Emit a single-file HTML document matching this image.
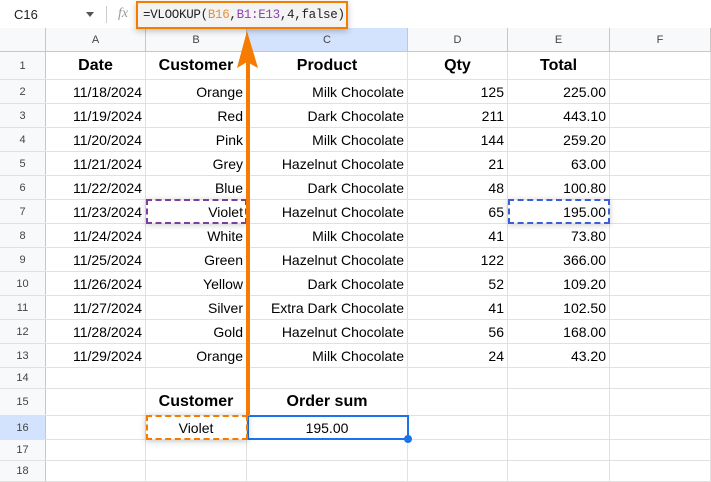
<!DOCTYPE html>
<html><head><meta charset="utf-8"><style>
*{margin:0;padding:0;box-sizing:border-box}
body{width:711px;height:482px;overflow:hidden;background:#fff;font-family:"Liberation Sans",Arial,sans-serif;position:relative}
.fb{position:absolute;left:0;top:0;width:711px;height:29px;background:#fff;border-bottom:1px solid #c7c7c7}
.nm{position:absolute;left:14px;top:7px;font-size:13px;color:#222}
.dd{position:absolute;left:86px;top:12px;width:0;height:0;border-left:4px solid transparent;border-right:4px solid transparent;border-top:5px solid #555}
.sep{position:absolute;left:106px;top:6px;width:1px;height:17px;background:#ccc}
.fx{position:absolute;left:118px;top:6px;font-family:"Liberation Serif",serif;font-style:italic;font-size:14px;color:#999}
.fbox{position:absolute;left:136px;top:1px;width:212px;height:28px;border:2px solid #f57c00;background:#f3f3f3;box-shadow:0 2px 6px rgba(0,0,0,.25);font-family:"Liberation Mono",monospace;font-size:12.5px;padding:5px 0 0 5px;color:#222;letter-spacing:-0.3px}
.g{position:absolute;left:0;top:28px;width:711px}
.row{display:flex;border-bottom:1px solid #e1e1e1;width:711px}
.row>div{border-right:1px solid #e1e1e1;font-size:14px;padding:0 3px;white-space:nowrap;overflow:hidden;color:#000;display:flex;align-items:center}
.row>div:nth-child(1){width:46px;background:#f8f9fa;color:#444;font-size:11px;justify-content:center;border-right-color:#c7c7c7}
.row>div:nth-child(2){width:100px}.row>div:nth-child(3){width:101px}.row>div:nth-child(4){width:161px}.row>div:nth-child(5){width:100px}.row>div:nth-child(6){width:102px}.row>div:nth-child(7){width:101px}
.row.hr{background:#f8f9fa;border-bottom-color:#c7c7c7}
.row.hr>div{background:#f8f9fa;color:#444;font-size:11px;justify-content:center;border-right-color:#c7c7c7}
.row>div.hc{background:#d3e3fd}
.row>.r{justify-content:flex-end}.row>.c{justify-content:center}.row>.b{font-weight:bold;font-size:16px;justify-content:center}
.ab{position:absolute}
</style></head><body>
<div class="fb"><div class="nm">C16</div><div class="dd"></div><div class="sep"></div><div class="fx">fx</div></div>
<div class="g">
<div class="row hr" style="height:24px"><div></div><div>A</div><div>B</div><div class="hc">C</div><div>D</div><div>E</div><div>F</div></div>
<div class="row" style="height:28px"><div>1</div><div class="b">Date</div><div class="b">Customer</div><div class="b">Product</div><div class="b">Qty</div><div class="b">Total</div><div></div></div>
<div class="row" style="height:24px"><div>2</div><div class="r">11/18/2024</div><div class="r">Orange</div><div class="r">Milk Chocolate</div><div class="r">125</div><div class="r">225.00</div><div></div></div>
<div class="row" style="height:24px"><div>3</div><div class="r">11/19/2024</div><div class="r">Red</div><div class="r">Dark Chocolate</div><div class="r">211</div><div class="r">443.10</div><div></div></div>
<div class="row" style="height:24px"><div>4</div><div class="r">11/20/2024</div><div class="r">Pink</div><div class="r">Milk Chocolate</div><div class="r">144</div><div class="r">259.20</div><div></div></div>
<div class="row" style="height:24px"><div>5</div><div class="r">11/21/2024</div><div class="r">Grey</div><div class="r">Hazelnut Chocolate</div><div class="r">21</div><div class="r">63.00</div><div></div></div>
<div class="row" style="height:24px"><div>6</div><div class="r">11/22/2024</div><div class="r">Blue</div><div class="r">Dark Chocolate</div><div class="r">48</div><div class="r">100.80</div><div></div></div>
<div class="row" style="height:24px"><div>7</div><div class="r">11/23/2024</div><div class="r">Violet</div><div class="r">Hazelnut Chocolate</div><div class="r">65</div><div class="r">195.00</div><div></div></div>
<div class="row" style="height:24px"><div>8</div><div class="r">11/24/2024</div><div class="r">White</div><div class="r">Milk Chocolate</div><div class="r">41</div><div class="r">73.80</div><div></div></div>
<div class="row" style="height:24px"><div>9</div><div class="r">11/25/2024</div><div class="r">Green</div><div class="r">Hazelnut Chocolate</div><div class="r">122</div><div class="r">366.00</div><div></div></div>
<div class="row" style="height:24px"><div>10</div><div class="r">11/26/2024</div><div class="r">Yellow</div><div class="r">Dark Chocolate</div><div class="r">52</div><div class="r">109.20</div><div></div></div>
<div class="row" style="height:24px"><div>11</div><div class="r">11/27/2024</div><div class="r">Silver</div><div class="r">Extra Dark Chocolate</div><div class="r">41</div><div class="r">102.50</div><div></div></div>
<div class="row" style="height:24px"><div>12</div><div class="r">11/28/2024</div><div class="r">Gold</div><div class="r">Hazelnut Chocolate</div><div class="r">56</div><div class="r">168.00</div><div></div></div>
<div class="row" style="height:24px"><div>13</div><div class="r">11/29/2024</div><div class="r">Orange</div><div class="r">Milk Chocolate</div><div class="r">24</div><div class="r">43.20</div><div></div></div>
<div class="row" style="height:21px"><div>14</div><div></div><div></div><div></div><div></div><div></div><div></div></div>
<div class="row" style="height:27px"><div>15</div><div></div><div class="b">Customer</div><div class="b">Order sum</div><div></div><div></div><div></div></div>
<div class="row" style="height:24px"><div class="hc">16</div><div></div><div class="c">Violet</div><div class="c">195.00</div><div></div><div></div><div></div></div>
<div class="row" style="height:21px"><div>17</div><div></div><div></div><div></div><div></div><div></div><div></div></div>
<div class="row" style="height:21px"><div>18</div><div></div><div></div><div></div><div></div><div></div><div></div></div>
</div>
<div class="ab" style="left:146px;top:199px;width:101px;height:25px;border:2px dashed #7b3fa0;box-shadow:0 1px 6px rgba(0,0,0,.2)"></div>
<div class="ab" style="left:508px;top:199px;width:102px;height:25px;border:2px dashed #3b5fd8;box-shadow:0 1px 6px rgba(0,0,0,.2)"></div>
<div class="ab" style="left:247px;top:415px;width:162px;height:25px;border:2px solid #1a73e8"></div>
<div class="ab" style="left:404px;top:435px;width:8px;height:8px;border-radius:50%;background:#1a73e8"></div>
<div class="ab" style="left:146px;top:415px;width:102px;height:25px;border:2px dashed #f57c00;box-shadow:0 1px 6px rgba(0,0,0,.25)"></div>
<svg class="ab" style="left:0;top:0" width="711" height="482"><path d="M248 416V62" stroke="#f57c00" stroke-width="4"/><path d="M247 31L237 68L247 62L258 68Z" fill="#f57c00"/></svg>
<div class="fbox">=VLOOKUP(<span style="color:#e69138">B16</span>,<span style="color:#8e44ad">B1:E13</span>,4,false)</div>
</body></html>
